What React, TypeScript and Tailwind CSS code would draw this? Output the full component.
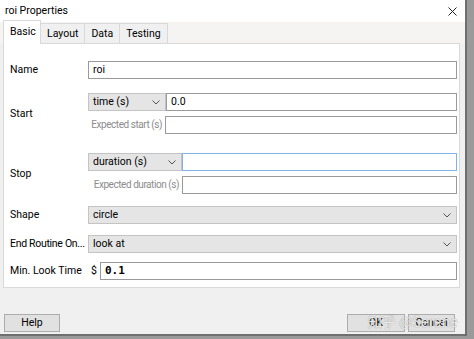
import React from "react";

const font = { fontFamily: 'Roboto, "Noto Sans", sans-serif' };

function Chevron() {
  return (
    <svg width="8" height="5" viewBox="0 0 8 5" className="shrink-0">
      <path d="M0.5 0.5 L4 4 L7.5 0.5" fill="none" stroke="#555" strokeWidth="1" />
    </svg>
  );
}

function Select({ value, w }: { value: string; w?: string }) {
  return (
    <div
      className={`h-[18px] ${w ?? "flex-1"} bg-[#e5e5e5] border border-[#c4c4c4] flex items-center justify-between pl-[4px] pr-[5px] text-black whitespace-nowrap`}
    >
      <span>{value}</span>
      <Chevron />
    </div>
  );
}

function Input({ value, focus, mono }: { value?: string; focus?: boolean; mono?: boolean }) {
  return (
    <div
      className={`h-[18px] flex-1 bg-white border ${focus ? "border-[#7eb4ea]" : "border-[#9a9a9a]"} flex items-center pl-[4px] text-black`}
      style={mono ? { fontFamily: '"DejaVu Sans Mono", monospace', fontWeight: 600, fontSize: "11px" } : undefined}
    >
      {value}
    </div>
  );
}

function Tab({ label, active }: { label: string; active?: boolean }) {
  return active ? (
    <div className="h-[24px] w-[38px] pl-[6px] bg-white border border-b-0 border-[#d9d9d9] flex items-start pt-[4px] -mb-px relative z-10">
      {label}
    </div>
  ) : (
    <div className="h-[20px] mt-[4px] px-[6px] bg-[#f0f0f0] border border-b-0 border-l-0 border-[#d9d9d9] flex items-center">
      {label}
    </div>
  );
}

export default function App() {
  return (
    <div className="w-[474px] h-[339px] bg-[#9a9a9a] overflow-hidden text-[10.5px] leading-[14px] whitespace-nowrap" style={font}>
      <div className="w-[467px] h-[336px] bg-[#f0f0f0] flex flex-col relative border-r-2 border-b-2 border-[#6f6f6f]">
        {/* title bar */}
        <div className="h-[22px] bg-white flex items-center justify-between pl-[5px] pr-[8px] text-black">
          <span>roi Properties</span>
          <svg width="9" height="9" viewBox="0 0 9 9">
            <path d="M0.5 0.5 L8.5 8.5 M8.5 0.5 L0.5 8.5" stroke="#222" strokeWidth="1" />
          </svg>
        </div>

        {/* tabs */}
        <div className="h-[21px] bg-[#f5f4f2] flex items-end pl-[3px]">
          <Tab label="Basic" active />
          <Tab label="Layout" />
          <Tab label="Data" />
          <Tab label="Testing" />
        </div>

        {/* panel */}
        <div className="ml-[3px] mr-[5px] h-[245px] bg-white border border-[#d9d9d9] flex flex-col pl-[6px] pr-[2px] text-black">
          <div className="flex items-center mt-[17px]">
            <div className="w-[78px]">Name</div>
            <Input value="roi" />
          </div>

          <div className="flex items-center mt-[14px]">
            <div className="w-[78px]">Start</div>
            <div className="flex-1 flex flex-col gap-[5px]">
              <div className="flex">
                <Select value="time (s)" w="w-[78px]" />
                <Input value="0.0" />
              </div>
              <div className="flex items-center">
                <div className="w-[77px] flex justify-end pr-[3px] text-[#8c8c8c] text-[10px] tracking-[-0.45px]">
                  Expected start (s)
                </div>
                <Input />
              </div>
            </div>
          </div>

          <div className="flex items-center mt-[19px]">
            <div className="w-[78px]">Stop</div>
            <div className="flex-1 flex flex-col gap-[5px]">
              <div className="flex">
                <Select value="duration (s)" w="w-[94px]" />
                <Input focus />
              </div>
              <div className="flex items-center">
                <div className="w-[94px] flex justify-end pr-[3px] text-[#8c8c8c] text-[10px] tracking-[-0.45px]">
                  Expected duration (s)
                </div>
                <Input />
              </div>
            </div>
          </div>

          <div className="flex items-center mt-[12px]">
            <div className="w-[78px]">Shape</div>
            <Select value="circle" />
          </div>

          <div className="flex items-center mt-[11px]">
            <div className="w-[78px] tracking-[-0.3px]">End Routine On...</div>
            <Select value="look at" />
          </div>

          <div className="flex items-center mt-[9px]">
            <div className="w-[78px]">Min. Look Time</div>
            <div className="w-[12px] pl-[3px]">$</div>
            <Input value="0.1" mono />
          </div>
        </div>

        {/* buttons */}
        <div className="flex-1 flex items-end justify-between pl-[4px] pr-[10px] pb-[2px]">
          <div className="w-[56px] h-[18px] bg-[#e1e1e1] border border-[#adadad] flex items-center justify-center">
            Help
          </div>
          <div className="flex">
            <div className="w-[58px] h-[18px] bg-[#e1e1e1] border border-[#adadad] flex items-center justify-center">
              OK
            </div>
            <div className="w-[47px] h-[18px] ml-[3px] bg-[#e1e1e1] border border-[#adadad] flex items-center justify-center">
              Cancel
            </div>
          </div>
        </div>

        {/* watermark */}
        <div
          className="absolute left-[368px] top-[312px] text-[14px] leading-[18px] text-white/80 pointer-events-none"
          style={{ fontFamily: '"Noto Sans CJK SC", sans-serif', textShadow: "0 0 1px #777" }}
        >
          知乎 @Serene
        </div>
      </div>
    </div>
  );
}
